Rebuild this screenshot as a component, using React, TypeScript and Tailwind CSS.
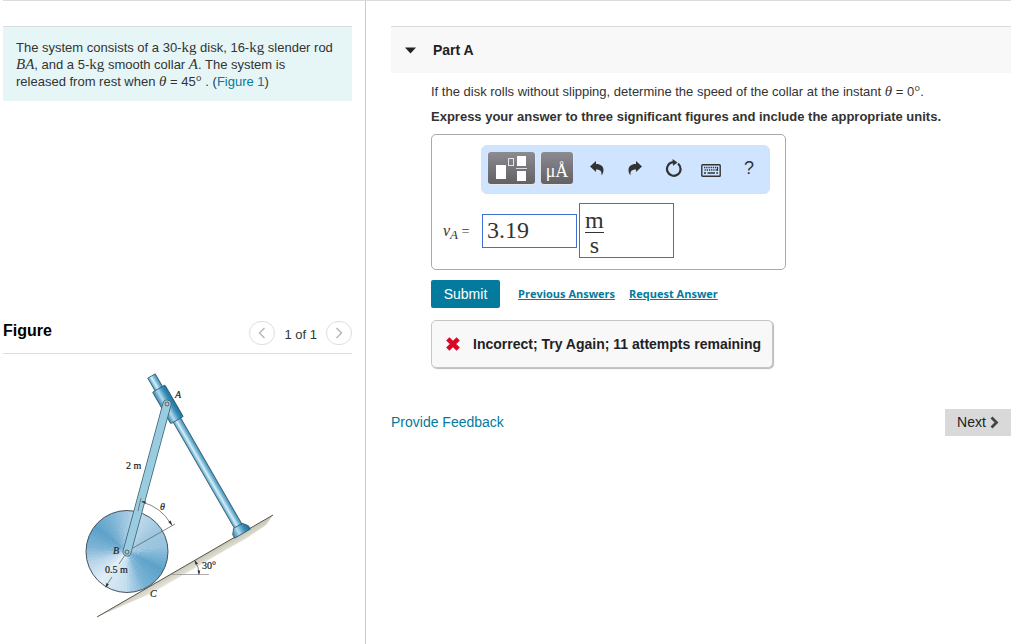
import React from "react";

const SANS = "font-['Liberation_Sans',Arial,sans-serif]";
const SERIF = "font-['Liberation_Serif','Times_New_Roman',serif]";

function MathText({ children }: { children: React.ReactNode }) {
  return <span className={`${SERIF} text-[15px] leading-none`}>{children}</span>;
}

const DISK_STOPS: [number, number[]][] = [
  [0, [170, 205, 228]],
  [20, [190, 217, 235]],
  [50, [160, 200, 224]],
  [80, [150, 195, 222]],
  [115, [92, 161, 202]],
  [150, [120, 178, 212]],
  [180, [195, 222, 238]],
  [220, [226, 238, 247]],
  [250, [185, 214, 234]],
  [275, [125, 180, 213]],
  [305, [92, 161, 202]],
  [335, [130, 183, 215]],
  [361, [170, 205, 228]],
];

function diskColor(angle: number) {
  const i = DISK_STOPS.findIndex(([a]) => a > angle);
  const [a0, c0] = DISK_STOPS[i - 1];
  const [a1, c1] = DISK_STOPS[i];
  const t = (angle - a0) / (a1 - a0);
  return `rgb(${c0.map((v, k) => Math.round(v + (c1[k] - v) * t)).join(",")})`;
}

function Disk({ cx, cy, r }: { cx: number; cy: number; r: number }) {
  const step = 5;
  const at = (deg: number) => {
    const a = (deg * Math.PI) / 180;
    return `${(cx + r * Math.sin(a)).toFixed(2)} ${(cy - r * Math.cos(a)).toFixed(2)}`;
  };
  return (
    <g>
      {Array.from({ length: 360 / step }, (_, i) => i * step).map((a) => (
        <path
          key={a}
          d={`M${cx} ${cy}L${at(a)}A${r} ${r} 0 0 1 ${at(a + step + 1)}Z`}
          fill={diskColor(a)}
        />
      ))}
      <circle cx={cx} cy={cy} r={r} fill="none" stroke="#47545f" strokeWidth="1" />
    </g>
  );
}

function Mechanism() {
  return (
    <svg
      viewBox="80 370 200 250"
      width="200"
      height="250"
      role="img"
      aria-label="Disk, slender rod and smooth collar on an incline"
    >
      <defs>
        <linearGradient id="steel" x1="0" x2="1" y1="0" y2="0">
          <stop offset="0" stopColor="#4d9dc4" />
          <stop offset="0.4" stopColor="#d9eef7" />
          <stop offset="0.7" stopColor="#79b9d8" />
          <stop offset="1" stopColor="#3d8db6" />
        </linearGradient>
        <linearGradient id="collar" x1="0" x2="1" y1="0" y2="0">
          <stop offset="0" stopColor="#2f86b3" />
          <stop offset="0.35" stopColor="#b4daec" />
          <stop offset="0.7" stopColor="#3a8fbb" />
          <stop offset="1" stopColor="#1c6f9e" />
        </linearGradient>
        <linearGradient id="ground" gradientUnits="userSpaceOnUse" x1="185" y1="566" x2="190" y2="575">
          <stop offset="0" stopColor="#cbc9b8" />
          <stop offset="1" stopColor="#f3f2ec" />
        </linearGradient>
      </defs>

      <path d="M97 617L273 515L266 525L247 538L217 555L178 578L150 594L122 606Z" fill="url(#ground)" />
      <Disk cx={127} cy={551.5} r={41} />
      <path d="M97 617L273 515" stroke="#57534a" strokeWidth="1" />

      <g transform="translate(151.5 376) rotate(-30)" stroke="#31566c" strokeWidth="0.8">
        <rect x="-4.3" y="0" width="8.6" height="178" fill="url(#steel)" />
        <path d="M-5 173L5 173L9 178V182H-9V178Z" fill="url(#collar)" />
        <rect x="-7.2" y="14.5" width="14.4" height="36.5" rx="0.8" fill="url(#collar)" />
      </g>

      <path d="M127 552L167 404" stroke="#3f6478" strokeWidth="9" strokeLinecap="round" />
      <path d="M127 552L167 404" stroke="#9accdf" strokeWidth="7.4" strokeLinecap="round" />
      <circle cx="167" cy="404" r="2" fill="#bcc6ca" stroke="#555" strokeWidth="0.9" />
      <circle cx="127" cy="552" r="2" fill="#bcc6ca" stroke="#555" strokeWidth="0.9" />

      <g stroke="#666" strokeWidth="0.8" fill="none">
        <path d="M133 548L175 524" />
        <path d="M141 498L138 511" />
        <path d="M142 502Q161 507 171 524" />
        <path d="M125 555L119 564M112 577L106 586" />
        <path d="M171 574.5H209" stroke="#999" />
        <path d="M195 561Q199 567 199 574" />
      </g>
      <g fill="#333">
        <path d="M141 501L146 501.400L145.400 503.800Z" />
        <path d="M172.500 526L168.300 522L170.600 520.500Z" />
        <path d="M105.500 588L106.300 583L108.900 584.500Z" />
        <path d="M194.500 560L198 563.500L195.500 564.800Z" />
        <path d="M199 575L197.500 570.500H200.300Z" />
      </g>
      <g
        fill="#222"
        stroke="#222"
        strokeWidth="0.2"
        className="font-['Liberation_Serif','Times_New_Roman',serif] text-[10px]"
      >
        <text x="175" y="398" fontStyle="italic">A</text>
        <text x="126" y="469">2 m</text>
        <text x="160" y="510" fontStyle="italic">θ</text>
        <text x="113" y="554" fontStyle="italic">B</text>
        <text x="105" y="573">0.5 m</text>
        <text x="202" y="569">30°</text>
        <text x="150" y="597" fontStyle="italic">C</text>
      </g>
    </svg>
  );
}

function UndoIcon() {
  return (
    <svg width="14" height="15" viewBox="0 0 14 15" fill="#333" aria-hidden="true">
      <path d="M0 5.500L6 0V3C11 3 13.500 5.500 13.500 9C13.500 11 12.800 13 11.500 14.500C12 10.500 10.500 8.500 6 8.500V11Z" />
    </svg>
  );
}

function RedoIcon() {
  return (
    <svg width="14" height="15" viewBox="0 0 14 15" fill="#333" aria-hidden="true">
      <path d="M14 5.500L8 0V3C3 3 0.500 5.500 0.500 9C0.500 11 1.200 13 2.500 14.500C2 10.500 3.500 8.500 8 8.500V11Z" />
    </svg>
  );
}

function ResetIcon() {
  return (
    <svg width="17" height="18" viewBox="0 0 17 18" fill="none" aria-hidden="true">
      <path d="M13 4.600A6.800 6.800 0 1 1 8 3.200" stroke="#333" strokeWidth="2.200" />
      <path d="M7.500 0L12.500 3.500L8 6.800Z" fill="#333" />
    </svg>
  );
}

function KeyboardIcon() {
  return (
    <svg width="20" height="13" viewBox="0 0 20 13" fill="none" aria-hidden="true">
      <rect x="0.800" y="0.800" width="18.400" height="11.400" rx="0.800" stroke="#333" strokeWidth="1.400" />
      <path d="M3 3.500H17M3.500 6H17" stroke="#333" strokeWidth="1.500" strokeDasharray="1.300 0.900" />
      <path d="M3 9H5M6.500 9H14M15.300 9H17" stroke="#333" strokeWidth="1.500" />
      <path d="M16.500 3V7" stroke="#333" strokeWidth="1.200" />
    </svg>
  );
}

function TemplatesIcon() {
  return (
    <svg width="32" height="26" viewBox="0 0 32 26" aria-hidden="true">
      <rect x="0" y="10" width="10" height="14" fill="#fff" />
      <rect x="12.500" y="3.500" width="5" height="7" fill="none" stroke="#e4e4e4" strokeWidth="1" />
      <rect x="21" y="1" width="9" height="10" fill="#fff" />
      <rect x="20" y="13" width="11" height="1" fill="#ddd" />
      <rect x="21" y="16" width="9" height="10" fill="#fff" />
    </svg>
  );
}

function Chevron({ flip }: { flip?: boolean }) {
  return (
    <svg width="8" height="12" viewBox="0 0 8 12" fill="none" aria-hidden="true">
      <path d={flip ? "M1.500 1L6.500 6L1.500 11" : "M6.500 1L1.500 6L6.500 11"} stroke="#b8b8b8" strokeWidth="1.500" />
    </svg>
  );
}

function Toolbar() {
  const dark =
    "flex h-[34px] justify-center rounded-[4px] border border-white/80 bg-linear-to-b from-[#8d8b92] to-[#626165]";
  const plain = "flex w-[38px] items-center justify-center text-[#333]";
  return (
    <div className="flex h-[49px] w-[289px] rounded-[6px] border border-[#dce0e5] bg-[#cfe5ff] pt-[5px] pl-[5px]">
      <button aria-label="Templates" className={`${dark} w-[49px] items-center`}>
        <TemplatesIcon />
      </button>
      <button
        aria-label="Units"
        className={`${dark} ${SERIF} ml-1 w-[34px] items-end pb-[3px] text-[18px] leading-5 text-white`}
      >
        μÅ
      </button>
      <div className="ml-1 flex h-[34px]">
        <button aria-label="Undo" className={plain}><UndoIcon /></button>
        <button aria-label="Redo" className={plain}><RedoIcon /></button>
        <button aria-label="Reset" className={plain}><ResetIcon /></button>
        <button aria-label="Keyboard" className={`${plain} pt-1`}><KeyboardIcon /></button>
        <button aria-label="Help" className={`${plain} text-[18px]`}>?</button>
      </div>
    </div>
  );
}

function ProblemPane() {
  const pager = "flex h-6 w-[26px] items-center justify-center rounded-full border border-[#dedede]";
  return (
    <aside className="w-[366px] shrink-0 border-r border-[#c3ccd4] pr-[13px] pl-[3px]">
      <div className="mt-[25px] border-t border-[#d9dddd] bg-[#e6f6f6] pt-3 pr-4 pb-[11px] pl-[13px] text-[13px] leading-[17px] text-[#333]">
        <p>
          The system consists of a 30-<MathText>kg</MathText> disk, 16-<MathText>kg</MathText> slender rod{" "}
          <MathText><i>BA</i></MathText>, and a 5-<MathText>kg</MathText> smooth collar{" "}
          <MathText><i>A</i></MathText>. The system is released from rest when{" "}
          <MathText><i>θ</i></MathText> = 45<MathText>°</MathText> . (
          <a href="#figure" className="text-[#047a9c]">Figure 1</a>)
        </p>
      </div>
      <div className="mt-[220px] flex h-[33px] items-start justify-between border-b border-[#dcdcdc]">
        <h2 className="text-[16px] leading-5 font-bold text-black">Figure</h2>
        <div className="flex items-center text-[13px] text-[#333]">
          <button aria-label="Previous figure" className={pager}>
            <Chevron />
          </button>
          <span className="px-[9px] pt-1">1 of 1</span>
          <button aria-label="Next figure" className={pager}>
            <Chevron flip />
          </button>
        </div>
      </div>
      <div id="figure" className="pt-4 pl-[77px]">
        <Mechanism />
      </div>
    </aside>
  );
}

function AnswerBox() {
  const field = "border border-[#3f6fd0] text-[24px] text-[#333]";
  return (
    <div className="mt-[8px] h-[136px] w-[355px] rounded-[5px] border border-[#a9a9a9] pt-[10px]">
      <div className="pl-[49px]">
        <Toolbar />
      </div>
      <div className="mt-[9px] flex items-center">
        <label htmlFor="speed" className={`${SERIF} w-[50px] pt-[2px] pl-[11px] text-[16px] text-[#333]`}>
          <i>v</i>
          <sub className="text-[13px]"><i>A</i></sub>
          <span className="text-[14px]"> =</span>
        </label>
        <input
          id="speed"
          defaultValue="3.19"
          className={`${SERIF} ${field} h-[34px] w-[95px] px-1 outline-none`}
        />
        <button
          aria-label="Units: metres per second"
          className={`${SERIF} ${field} ml-[2px] flex h-[55px] w-[95px] items-start pt-1 pl-[5px] leading-6`}
        >
          <span className="flex flex-col items-center">
            <span className="border-b border-[#333]">m</span>
            <span>s</span>
          </span>
        </button>
      </div>
    </div>
  );
}

function PartPane() {
  const link = "font-['Open_Sans',sans-serif] text-[11px] font-bold text-[#047a9c] underline";
  return (
    <main className="min-w-0 flex-1 pt-[25px] pl-[25px] text-[#333]">
      <header className="flex h-[47px] items-center border-t border-[#dcdcdc] bg-[#f8f8f8] pl-[14px]">
        <button aria-label="Collapse Part A" aria-expanded="true" className="w-[28px]">
          <svg width="11" height="7" viewBox="0 0 11 7" fill="#222" aria-hidden="true">
            <path d="M0 0.500H11L5.500 6.500Z" />
          </svg>
        </button>
        <h1 className="text-[14px] font-bold text-[#222]">Part A</h1>
      </header>
      <div className="pl-10 text-[13px] leading-[18px]">
        <p className="pt-[10px]">
          If the disk rolls without slipping, determine the speed of the collar at the instant{" "}
          <MathText><i>θ</i></MathText> = 0<MathText>°</MathText>.
        </p>
        <p className="mt-[7px] font-bold">
          Express your answer to three significant figures and include the appropriate units.
        </p>
        <AnswerBox />
        <div className="mt-[10px] flex items-center">
          <button className="h-7 w-[69px] rounded-[2px] bg-[#047a9c] text-[14px] text-white">Submit</button>
          <a href="#previous" className={`${link} ml-[18px]`}>Previous Answers</a>
          <a href="#request" className={`${link} ml-[14px]`}>Request Answer</a>
        </div>
        <div role="status" className="mt-[12px] flex h-[48px] w-[342px] items-center rounded-[5px] border border-[#c6c6c6] bg-[#f8f8f8] pl-[14px] text-[14px] font-bold text-[#222] shadow-[1px_1px_1px_#bbb]">
          <svg width="14" height="14" viewBox="0 0 14 14" aria-hidden="true">
            <path d="M1.800 1.800L12.200 12.200M12.200 1.800L1.800 12.200" stroke="#dd0526" strokeWidth="4.600" />
          </svg>
          <span className="ml-[13px]">Incorrect; Try Again; 11 attempts remaining</span>
        </div>
      </div>
      <footer className="mt-[41px] flex items-center justify-between text-[14px]">
        <a href="#feedback" className="text-[#047a9c]">Provide Feedback</a>
        <button className="flex h-[27px] w-[66px] items-center justify-center gap-1 bg-[#d9d9d9] text-[#222]">
          Next
          <svg width="9" height="13" viewBox="0 0 9 13" fill="none" aria-hidden="true">
            <path d="M1.500 1.500L6.500 6.500L1.500 11.500" stroke="#444" strokeWidth="2.800" />
          </svg>
        </button>
      </footer>
    </main>
  );
}

export default function App() {
  return (
    <div className={`${SANS} min-h-screen bg-white pr-[13px]`}>
      <div className="ml-[3px] border-t border-[#dcdcdc]" />
      <div className="flex min-h-[calc(100vh-1px)]">
        <ProblemPane />
        <PartPane />
      </div>
    </div>
  );
}
